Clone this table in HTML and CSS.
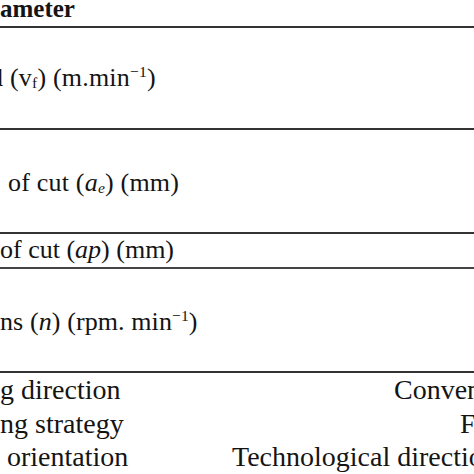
FILE: index.html
```html
<!DOCTYPE html>
<html>
<head>
<meta charset="utf-8">
<link rel="stylesheet" href="styles.css">
</head>
<body>
<div class="sheet">
  <div class="row head"><span class="txt bold">ameter</span></div>
  <div class="row r1"><span class="txt in-r1">d (v<sub class="sub">f</sub>) (m.min<sup class="sup">−1</sup>)</span></div>
  <div class="row r2"><span class="txt in-r2">of cut (<i>a<sub class="sub">e</sub></i>) (mm)</span></div>
  <div class="row r3"><span class="txt in-r3">of cut (<i>ap</i>) (mm)</span></div>
  <div class="row r4"><span class="txt in-r4">ns (<i>n</i>) (rpm. min<sup class="sup">−1</sup>)</span></div>
  <div class="grid">
    <div class="cell">g direction</div>
    <div class="cell val v1">Conventional</div>
    <div class="cell">ng strategy</div>
    <div class="cell val v2">F</div>
    <div class="cell c3">orientation</div>
    <div class="cell val v3">Technological direction</div>
  </div>
</div>
</body>
</html>
```
FILE: styles.css
```css
html, body {
  margin: 0;
  padding: 0;
  background: #ffffff;
}
body {
  width: 474px;
  height: 474px;
  overflow: hidden;
  font-family: "Liberation Serif", "Times New Roman", serif;
  font-size: 26px;
  color: #141414;
}
.sheet {
  display: flex;
  flex-direction: column;
  width: 474px;
}
.row {
  box-sizing: border-box;
  border-bottom: 2px solid #333333;
  white-space: nowrap;
}
.txt {
  display: block;
  line-height: 26px;
}
.bold {
  font-size: 25px;
  font-weight: bold;
  line-height: 21px;
  margin-top: -2px;
}
.head { height: 28px; }
.r1 { height: 102px; }
.r2 { height: 104px; }
.r3 { height: 35px; border-bottom-color: #444444; }
.r4 { height: 104px; }
.in-r1 { padding-top: 37px; margin-left: -10px; letter-spacing: 0.2px; }
.in-r2 { padding-top: 40px; padding-left: 8px; letter-spacing: 0.2px; }
.in-r3 { padding-top: 3px; padding-left: 0; }
.in-r4 { padding-top: 40px; padding-left: 0; letter-spacing: 0.1px; }
.sub {
  font-size: 60%;
  vertical-align: -2px;
  line-height: 0;
}
.sup {
  font-size: 60%;
  vertical-align: 9px;
  line-height: 0;
}
i { font-style: italic; }
.grid {
  display: grid;
  grid-template-columns: 232px 1fr;
  font-size: 28px;
  line-height: 33.5px;
  white-space: nowrap;
}
.c3 { padding-left: 7px; }
.v1 { padding-left: 162px; }
.v2 { padding-left: 228px; }
.v3 { padding-left: 0; }
```
